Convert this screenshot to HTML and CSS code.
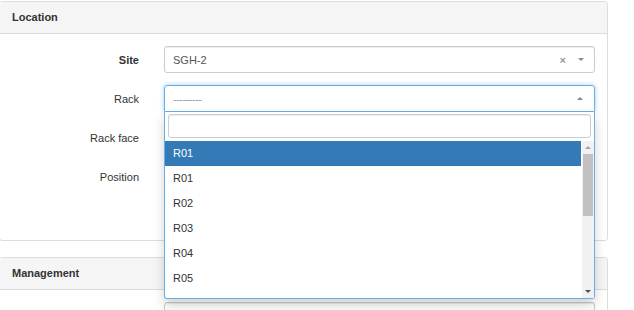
FILE: index.html
```html
<!DOCTYPE html>
<html lang="en">
<head>
    <meta charset="UTF-8">
    <meta name="viewport" content="width=device-width, initial-scale=1.0">
    <title>Add device - Location</title>

    <link rel="stylesheet" href="styles.css">
</head>
<body>
    <div class="panel">
        <div class="panel-heading">Location</div>
        <div class="panel-body">
            <div class="form-group">
                <label class="required">Site</label>
                <div class="field">
                    <div class="select">
                        <span class="value">SGH-2</span>
                        <span class="clear">&times;</span>
                        <span class="arrow down"></span>
                    </div>
                </div>
            </div>

            <div class="form-group">
                <label>Rack</label>
                <div class="field">
                    <div class="select open">
                        <span class="value placeholder">---------</span>
                        <span class="arrow up"></span>
                    </div>

                    <!-- open select2 dropdown -->
                    <div class="dropdown">
                        <div class="search">
                            <input type="text">
                        </div>
                        <div class="results">
                            <ul class="options">
                                <li class="highlighted">R01</li>
                                <li>R01</li>
                                <li>R02</li>
                                <li>R03</li>
                                <li>R04</li>
                                <li>R05</li>
                            </ul>
                            <div class="scrollbar">
                                <span class="scroll-btn top"></span>
                                <span class="thumb"></span>
                                <span class="scroll-btn bottom"></span>
                            </div>
                        </div>
                    </div>
                </div>
            </div>

            <div class="form-group">
                <label>Rack face</label>
                <div class="field">
                    <div class="select">
                        <span class="value"></span>
                        <span class="arrow down"></span>
                    </div>
                </div>
            </div>

            <div class="form-group">
                <label>Position</label>
                <div class="field">
                    <div class="select">
                        <span class="value"></span>
                        <span class="arrow down"></span>
                    </div>
                </div>
            </div>
        </div>
    </div>

    <div class="panel">
        <div class="panel-heading">Management</div>
        <div class="panel-body">
            <div class="form-group">
                <label></label>
                <div class="field">
                    <div class="select">
                        <span class="value"></span>
                        <span class="arrow down"></span>
                    </div>
                </div>
            </div>
        </div>
    </div>
</body>
</html>
```

FILE: styles.css
```css
/* General Styles */
body {
    font-family: "Liberation Sans", Arial, sans-serif;
    font-size: 11px;
    color: #333;
    background: #fff;
    margin: 0;
    padding: 1px 0 0;
    overflow: hidden;
}

/* Panels */
.panel {
    width: 609px;
    margin-left: -1px;
    margin-bottom: 16px;
    border: 1px solid #ddd;
    border-radius: 3px;
    box-sizing: border-box;
    background: #fff;
}

.panel-heading {
    height: 31px;
    line-height: 31px;
    padding-left: 12px;
    background: #f5f5f5;
    border-bottom: 1px solid #ddd;
    font-weight: bold;
    color: #333;
}

.panel-body {
    padding: 12px 12px 50px 0;
}

/* Form Rows */
.form-group {
    display: flex;
    align-items: center;
    gap: 25px;
    margin-bottom: 12px;
}

.form-group:last-child {
    margin-bottom: 0;
}

.form-group label {
    width: 139px;
    text-align: right;
    color: #333;
}

.form-group label.required {
    font-weight: bold;
}

.field {
    position: relative;
    width: 431px;
}

/* Select box */
.select {
    display: flex;
    align-items: center;
    height: 27px;
    padding: 0 8px;
    border: 1px solid #ccc;
    border-radius: 3px;
    box-sizing: border-box;
    box-shadow: inset 0 1px 1px rgba(0, 0, 0, 0.075);
    color: #555;
}

.select .value {
    flex: 1;
}

.select .placeholder {
    color: #999;
    letter-spacing: -0.5px;
}

.select .clear {
    color: #999;
    font-weight: bold;
    font-size: 11px;
    margin-right: 12px;
}

.arrow {
    width: 0;
    height: 0;
    border-left: 3px solid transparent;
    border-right: 3px solid transparent;
    margin-right: 2px;
}

.arrow.down {
    border-top: 3px solid #888;
}

.arrow.up {
    border-bottom: 3px solid #888;
    margin-right: 3px;
}

.select.open {
    border-color: #66afe9;
    border-radius: 3px 3px 0 0;
    box-shadow: 0 0 5px rgba(102, 175, 233, 0.6);
}

/* Dropdown */
.dropdown {
    position: absolute;
    top: 100%;
    left: 0;
    right: 0;
    z-index: 10;
    background: #fff;
    border: 1px solid #66afe9;
    border-top: none;
    border-radius: 0 0 3px 3px;
    box-shadow: 0 6px 12px rgba(0, 0, 0, 0.175);
}

.search {
    padding: 2px 3px 3px;
}

.search input {
    display: block;
    width: 100%;
    height: 24px;
    margin: 0;
    border: 1px solid #ccc;
    border-radius: 3px;
    box-sizing: border-box;
    box-shadow: inset 0 1px 1px rgba(0, 0, 0, 0.075);
    outline: none;
}

.results {
    display: flex;
    height: 157px;
    overflow: hidden;
}

.options {
    flex: 1;
    list-style: none;
    margin: 0;
    padding: 0;
}

.options li {
    height: 25px;
    line-height: 25px;
    padding-left: 8px;
    color: #333;
}

.options li.highlighted {
    background: #337ab7;
    color: #fff;
}

/* Fake scrollbar */
.scrollbar {
    display: flex;
    flex-direction: column;
    align-items: center;
    width: 12px;
    margin-left: 1px;
    background: #f1f1f1;
}

.scroll-btn {
    display: flex;
    align-items: center;
    justify-content: center;
    width: 12px;
    height: 13px;
}

.scroll-btn.top::before {
    content: "";
    border-left: 3px solid transparent;
    border-right: 3px solid transparent;
    border-bottom: 3px solid #a3a3a3;
}

.scroll-btn.bottom {
    margin-top: auto;
}

.scroll-btn.bottom::before {
    content: "";
    border-left: 3px solid transparent;
    border-right: 3px solid transparent;
    border-top: 3px solid #505050;
}

.thumb {
    width: 10px;
    height: 62px;
    background: #c1c1c1;
}
```
